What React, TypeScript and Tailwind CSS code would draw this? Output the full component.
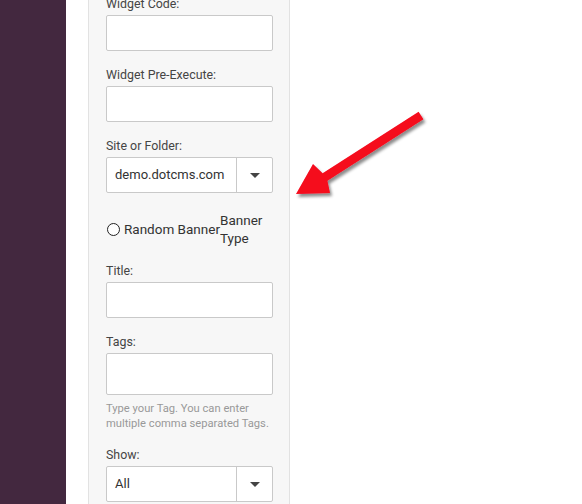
import React from 'react';

const font = { fontFamily: 'Roboto, "Liberation Sans", sans-serif' };

function Label({ children }: { children: React.ReactNode }) {
  return <div className="text-[12.4px] leading-4 text-[#454545] mb-[3px]">{children}</div>;
}

function TextBox({ tall }: { tall?: boolean }) {
  return (
    <div
      className={`w-full ${tall ? 'h-[42px]' : 'h-9'} bg-white border border-[#c9c9c9] rounded-[2px]`}
    />
  );
}

function SelectBox({ value }: { value: string }) {
  return (
    <div className="w-full h-9 bg-white border border-[#c9c9c9] rounded-[2px] flex items-stretch">
      <div className="flex-1 flex items-center pl-[8px] text-[13px] text-[#333]">{value}</div>
      <div className="w-9 border-l border-[#c9c9c9] flex items-center justify-center">
        <span className="w-0 h-0 border-l-[5px] border-r-[5px] border-t-[5px] border-l-transparent border-r-transparent border-t-[#444]" />
      </div>
    </div>
  );
}

export default function App() {
  return (
    <div className="relative w-[582px] h-[504px] overflow-hidden bg-white flex" style={font}>
      <aside className="w-[66px] shrink-0 bg-[#43283f]" />
      <div className="w-[22px] shrink-0 bg-white" />
      <section className="w-[202px] shrink-0 bg-[#f7f7f7] border-l border-r border-[#e2e2e2] pl-[17px] pr-[16px] -mt-[4px]">
        <Label>Widget Code:</Label>
        <TextBox />

        <div className="mt-4">
          <Label>Widget Pre-Execute:</Label>
          <TextBox />
        </div>

        <div className="mt-4">
          <Label>Site or Folder:</Label>
          <SelectBox value="demo.dotcms.com" />
        </div>

        <div className="mt-[18px] flex items-start text-[13.5px] text-[#333]">
          <div className="flex items-center mt-[8px]">
            <span className="w-[13px] h-[13px] rounded-full border border-[#222] bg-white ml-[1px] mr-[4px]" />
            <span>Random Banner</span>
          </div>
          <div className="leading-[18px]">
            Banner
            <br />
            Type
          </div>
        </div>

        <div className="mt-4">
          <Label>Title:</Label>
          <TextBox />
        </div>

        <div className="mt-4">
          <Label>Tags:</Label>
          <TextBox tall />
          <p className="mt-[6px] text-[11.2px] leading-[15px] text-[#999]">
            Type your Tag. You can enter multiple comma separated Tags.
          </p>
        </div>

        <div className="mt-4">
          <Label>Show:</Label>
          <SelectBox value="All" />
        </div>
      </section>

      <svg
        className="absolute left-[280px] top-[100px]"
        width="160"
        height="110"
        viewBox="280 100 160 110"
      >
        <defs>
          <filter id="sh" x="-20%" y="-20%" width="140%" height="140%">
            <feDropShadow dx="2" dy="3" stdDeviation="1.5" floodColor="#000" floodOpacity="0.45" />
          </filter>
        </defs>
        <polygon
          points="418.6,111.7 423.4,119.3 327.4,180.8 330,193 296,194 313,164 322.6,173.2"
          fill="#f5081c"
          filter="url(#sh)"
        />
      </svg>
    </div>
  );
}
